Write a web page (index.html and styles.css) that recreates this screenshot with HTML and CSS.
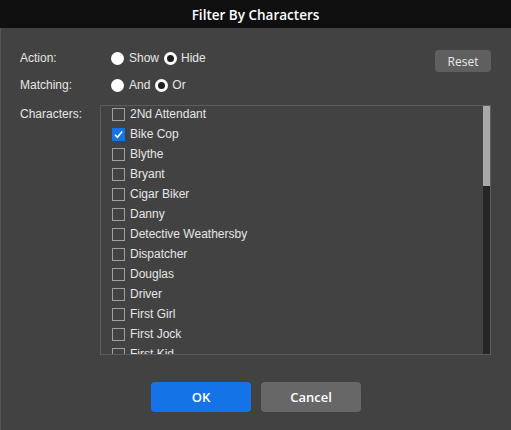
FILE: index.html
```html
<!DOCTYPE html>
<html>
<head>
<meta charset="utf-8">
<link rel="stylesheet" href="styles.css">
</head>
<body>
<div class="dialog">
  <div class="titlebar">Filter By Characters</div>
  <div class="content">
    <div class="top">
      <div class="opts">
        <div class="row">
          <span class="label">Action:</span>
          <span class="radio"></span><span class="rtext">Show</span>
          <span class="radio on"></span><span class="rtext">Hide</span>
        </div>
        <div class="row">
          <span class="label">Matching:</span>
          <span class="radio"></span><span class="rtext">And</span>
          <span class="radio on"></span><span class="rtext">Or</span>
        </div>
      </div>
      <button class="reset">Reset</button>
    </div>
    <div class="chars">
      <span class="label">Characters:</span>
      <div class="listbox">
        <div class="items">
          <div class="item"><span class="cb"></span>2Nd Attendant</div>
          <div class="item"><span class="cb checked"><svg viewBox="0 0 13 13" width="13" height="13"><path d="M3 6.8 L5.4 9.2 L10.2 3.6" fill="none" stroke="#fff" stroke-width="1.6"/></svg></span>Bike Cop</div>
          <div class="item"><span class="cb"></span>Blythe</div>
          <div class="item"><span class="cb"></span>Bryant</div>
          <div class="item"><span class="cb"></span>Cigar Biker</div>
          <div class="item"><span class="cb"></span>Danny</div>
          <div class="item"><span class="cb"></span>Detective Weathersby</div>
          <div class="item"><span class="cb"></span>Dispatcher</div>
          <div class="item"><span class="cb"></span>Douglas</div>
          <div class="item"><span class="cb"></span>Driver</div>
          <div class="item"><span class="cb"></span>First Girl</div>
          <div class="item"><span class="cb"></span>First Jock</div>
          <div class="item"><span class="cb"></span>First Kid</div>
        </div>
        <div class="scrollbar"><div class="thumb"></div></div>
      </div>
    </div>
    <div class="buttons">
      <button class="btn ok">OK</button>
      <button class="btn cancel">Cancel</button>
    </div>
  </div>
</div>
</body>
</html>
```

FILE: styles.css
```css
html, body {
  margin: 0;
  padding: 0;
  background: #424242;
}
.dialog {
  width: 511px;
  height: 430px;
  display: flex;
  flex-direction: column;
  font-family: "Liberation Sans", Arial, sans-serif;
  font-size: 12px;
  color: #e6e6e6;
}
.titlebar {
  height: 28px;
  background: #0f0f0f;
  color: #ffffff;
  font-family: "Open Sans", "Noto Sans", sans-serif;
  font-weight: 600;
  font-size: 13.5px;
  display: flex;
  align-items: center;
  justify-content: center;
  padding-top: 1px;
  box-sizing: border-box;
}
.content {
  flex: 1;
  background: #424242;
  border-left: 1px solid #545454;
  padding: 20px 20px 0 19px;
  display: flex;
  flex-direction: column;
}
.top {
  display: flex;
  justify-content: space-between;
  align-items: flex-start;
}
.opts {
  display: flex;
  flex-direction: column;
  gap: 13px;
  padding-top: 3px;
}
.row {
  display: flex;
  align-items: center;
  height: 14px;
}
.label {
  width: 91px;
  flex: none;
}
.radio {
  width: 13px;
  height: 13px;
  border-radius: 50%;
  background: #ffffff;
  box-sizing: border-box;
  margin-right: 5px;
}
.radio.on {
  background: #1e1e1e;
  border: 3.5px solid #ffffff;
  margin-right: 4px;
}
.rtext {
  margin-right: 5px;
}
.reset {
  margin-top: 2px;
  width: 56px;
  height: 22px;
  border: none;
  border-radius: 4px;
  background: #5f5f5f;
  color: #e8e8e8;
  font-family: "Open Sans", "Noto Sans", sans-serif;
  font-size: 12px;
  padding: 0;
}
.chars {
  display: flex;
  margin-top: 13px;
}
.chars .label {
  padding-top: 2px;
  width: 80px;
}
.listbox {
  width: 391px;
  height: 250px;
  border: 1px solid #5c5c5c;
  box-sizing: border-box;
  display: flex;
  overflow: hidden;
}
.items {
  flex: 1;
  margin-top: -2px;
  padding-left: 11px;
  display: flex;
  flex-direction: column;
}
.item {
  height: 20px;
  display: flex;
  align-items: center;
  flex: none;
}
.cb {
  width: 13px;
  height: 13px;
  box-sizing: border-box;
  border: 1.5px solid #a0a0a0;
  margin-right: 5px;
  display: flex;
}
.cb.checked {
  border: none;
  background: #1473e6;
}
.scrollbar {
  width: 7px;
  background: #262626;
  display: flex;
  flex-direction: column;
}
.thumb {
  height: 80px;
  background: #a9a9a9;
}
.buttons {
  display: flex;
  justify-content: center;
  gap: 10px;
  margin-top: 27px;
  padding-left: 1px;
}
.btn {
  width: 100px;
  height: 30px;
  border: none;
  border-radius: 4px;
  color: #ffffff;
  font-family: "Open Sans", "Noto Sans", sans-serif;
  font-weight: 600;
  font-size: 13px;
  padding: 0;
}
.ok {
  background: #1473e6;
}
.cancel {
  background: #676767;
}
```
